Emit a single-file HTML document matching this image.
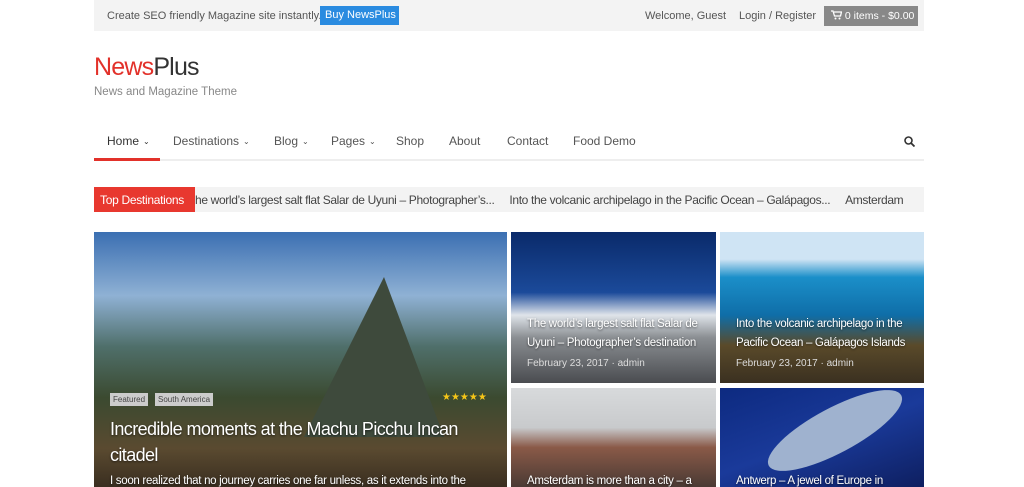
<!DOCTYPE html>
<html><head><meta charset="utf-8"><style>
*{margin:0;padding:0;box-sizing:border-box}
body{width:1024px;height:487px;overflow:hidden;background:#fff;font-family:"Liberation Sans",sans-serif;position:relative}
.a{position:absolute;white-space:nowrap}
.top{left:94px;top:0;width:830px;height:31px;background:#f3f3f3;font-size:11px;color:#555}
.nav span{position:absolute;top:134px;font-size:12px;color:#555;white-space:nowrap}
.nav i{font-style:normal;font-size:8px;margin-left:4px;position:relative;top:-1px}
.tile{position:absolute;overflow:hidden}
.tile .t{position:absolute;left:16px;color:#fff;font-size:11.5px;line-height:19px;text-shadow:0 1px 2px rgba(0,0,0,.6);letter-spacing:-.3px;white-space:nowrap}
.tile .m{position:absolute;left:16px;color:#ddd;font-size:10px;white-space:nowrap}
</style></head><body>
<div class="a top">
 <span class="a" style="left:13px;top:10px">Create SEO friendly Magazine site instantly.</span>
 <span class="a" style="left:226px;top:6px;height:19px;width:79px;background:#2a8be0;color:#fff;padding:3px 0 0 5px;font-size:11px">Buy NewsPlus</span>
 <span class="a" style="left:551px;top:10px">Welcome, Guest</span>
 <span class="a" style="left:645px;top:10px">Login / Register</span>
 <span class="a" style="left:730px;top:6px;width:94px;height:20px;background:#888;color:#fff;font-size:10.5px;padding:4px 0 0 7px"><svg width="11" height="10" viewBox="0 0 11 10" style="vertical-align:-1px"><path d="M0 1h2l1.5 5h6l1-4H3" fill="none" stroke="#fff" stroke-width="1.3"/><circle cx="4.5" cy="8.5" r="1" fill="#fff"/><circle cx="8.5" cy="8.5" r="1" fill="#fff"/></svg> 0 items - $0.00</span>
</div>
<div class="a" style="left:94px;top:53px;font-size:25px;color:#333;letter-spacing:-.8px"><span style="color:#e2312a">News</span>Plus</div>
<div class="a" style="left:94px;top:86px;font-size:11.5px;color:#888">News and Magazine Theme</div>
<div class="nav">
 <span style="left:107px;color:#333">Home<i>⌄</i></span>
 <span style="left:173px">Destinations<i>⌄</i></span>
 <span style="left:274px">Blog<i>⌄</i></span>
 <span style="left:331px">Pages<i>⌄</i></span>
 <span style="left:396px">Shop</span>
 <span style="left:449px">About</span>
 <span style="left:507px">Contact</span>
 <span style="left:573px">Food Demo</span>
</div>
<svg class="a" style="left:904px;top:136px" width="11" height="11" viewBox="0 0 11 11"><circle cx="4.5" cy="4.5" r="3.5" fill="none" stroke="#333" stroke-width="1.6"/><path d="M7 7l3.5 3.5" stroke="#333" stroke-width="1.8"/></svg>
<div class="a" style="left:94px;top:159px;width:830px;height:2px;background:#eee"></div>
<div class="a" style="left:94px;top:158px;width:66px;height:3px;background:#e2312a"></div>
<div class="a" style="left:94px;top:187px;width:830px;height:25px;background:#f3f3f3;overflow:hidden;font-size:12px;color:#444">
 <span class="a" style="left:101px;top:6px;letter-spacing:-.35px">he world’s largest salt flat Salar de Uyuni – Photographer’s...&nbsp;&nbsp;&nbsp;&nbsp;&nbsp;Into the volcanic archipelago in the Pacific Ocean – Galápagos...&nbsp;&nbsp;&nbsp;&nbsp;&nbsp;Amsterdam</span>
 <span class="a" style="left:0;top:0;width:101px;height:25px;background:#e8382f;color:#fff;padding:6px 0 0 6px;letter-spacing:-.3px">Top Destinations</span>
</div>
<div class="tile" style="left:94px;top:232px;width:413px;height:255px;background:linear-gradient(180deg,#3b6fb2 0%,#8fb1d4 25%,#4f6f6a 45%,#3b4a30 65%,#5a4a30 85%,#3a2e20 100%)">
 <div class="a" style="left:210px;top:45px;width:0;height:0;border-left:80px solid transparent;border-right:60px solid transparent;border-bottom:160px solid #3e4a3c"></div>
 <span class="a" style="left:16px;top:161px;background:#ccc;color:#444;font-size:8px;padding:2px 3px">Featured</span>
 <span class="a" style="left:61px;top:161px;background:#ccc;color:#444;font-size:8px;padding:2px 3px">South America</span>
 <span class="a" style="left:348px;top:160px;color:#f5c518;font-size:10px">★★★★★</span>
 <div class="t" style="top:184px;font-size:18px;line-height:26px;letter-spacing:-.6px">Incredible moments at the Machu Picchu Incan<br>citadel</div>
 <div class="t" style="top:240px;font-size:11.5px">I soon realized that no journey carries one far unless, as it extends into the</div>
</div>
<div class="tile" style="left:511px;top:232px;width:205px;height:151px;background:linear-gradient(180deg,#0a2a6a 0%,#1b4a9a 40%,#dfe4ea 55%,#8a8e92 70%,#4a4c50 100%)">
 <div class="t" style="top:83px">The world’s largest salt flat Salar de<br>Uyuni – Photographer’s destination</div>
 <div class="m" style="top:126px">February 23, 2017 · admin</div>
</div>
<div class="tile" style="left:720px;top:232px;width:204px;height:151px;background:linear-gradient(180deg,#cfe4f4 0%,#cfe4f4 18%,#1b8fc9 30%,#0f6ea8 55%,#5a4a2a 75%,#3a3020 100%)">
 <div class="t" style="top:83px">Into the volcanic archipelago in the<br>Pacific Ocean – Galápagos Islands</div>
 <div class="m" style="top:126px">February 23, 2017 · admin</div>
</div>
<div class="tile" style="left:511px;top:388px;width:205px;height:99px;background:linear-gradient(180deg,#d8dadc 0%,#c8cacc 40%,#8a5a48 60%,#4a3a34 100%)">
 <div class="t" style="top:84px">Amsterdam is more than a city – a</div>
</div>
<div class="tile" style="left:720px;top:388px;width:204px;height:99px;background:linear-gradient(160deg,#0d2a80 0%,#1a3a9a 50%,#0e1f60 100%)">
 <div class="a" style="left:40px;top:20px;width:150px;height:45px;background:#9fb2cf;border-radius:50%;transform:rotate(-28deg)"></div>
 <div class="t" style="top:84px">Antwerp – A jewel of Europe in</div>
</div>
</body></html>
